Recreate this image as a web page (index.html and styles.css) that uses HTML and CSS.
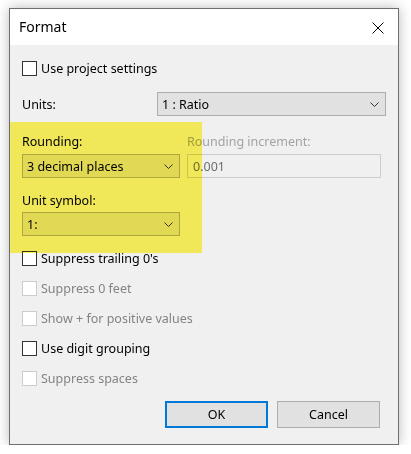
FILE: index.html
```html
<!DOCTYPE html>
<html>
<head>
<meta charset="utf-8">
<link rel="stylesheet" href="styles.css">
</head>
<body>
<div class="window">
  <div class="titlebar">
    <span class="title">Format</span>
    <svg class="close" width="12" height="12" viewBox="0 0 12 12"><path d="M0.5 0.5 L11.5 11.5 M11.5 0.5 L0.5 11.5" stroke="#000" stroke-width="1" fill="none"/></svg>
  </div>
  <div class="content">
    <div class="check-row first">
      <span class="box"></span><span class="check-label">Use project settings</span>
    </div>
    <div class="units-row">
      <span class="units-label">Units:</span>
      <div class="select units-select"><span>1 : Ratio</span><svg class="chev" width="9" height="5" viewBox="0 0 9 5"><polyline points="0.5,0.5 4.5,4.5 8.5,0.5" fill="none" stroke="#333" stroke-width="1"/></svg></div>
    </div>
    <div class="round-labels">
      <span class="col-left">Rounding:</span>
      <span class="col-right disabled-text">Rounding increment:</span>
    </div>
    <div class="round-controls">
      <div class="select col-left"><span>3 decimal places</span><svg class="chev" width="9" height="5" viewBox="0 0 9 5"><polyline points="0.5,0.5 4.5,4.5 8.5,0.5" fill="none" stroke="#333" stroke-width="1"/></svg></div>
      <div class="textbox col-right">0.001</div>
    </div>
    <div class="sym-label">Unit symbol:</div>
    <div class="select col-left"><span>1:</span><svg class="chev" width="9" height="5" viewBox="0 0 9 5"><polyline points="0.5,0.5 4.5,4.5 8.5,0.5" fill="none" stroke="#333" stroke-width="1"/></svg></div>
    <div class="checks">
      <div class="check-row"><span class="box"></span><span class="check-label">Suppress trailing 0's</span></div>
      <div class="check-row dis"><span class="box"></span><span class="check-label">Suppress 0 feet</span></div>
      <div class="check-row dis"><span class="box"></span><span class="check-label">Show + for positive values</span></div>
      <div class="check-row"><span class="box"></span><span class="check-label">Use digit grouping</span></div>
      <div class="check-row dis"><span class="box"></span><span class="check-label">Suppress spaces</span></div>
    </div>
    <div class="buttons">
      <div class="btn default">OK</div>
      <div class="btn">Cancel</div>
    </div>
  </div>
  <div class="highlight"></div>
</div>
</body>
</html>
```
FILE: styles.css
```css
html, body {
  margin: 0;
  padding: 0;
  background: #ffffff;
}
body {
  font-family: "Noto Sans", "Open Sans", sans-serif;
  font-size: 12.5px;
  color: #000;
}
.window {
  position: relative;
  margin: 8px 0 0 9px;
  width: 388px;
  height: 435px;
  border: 1px solid #6e6e6e;
  background: #f0f0f0;
  box-shadow: 0 0 12px rgba(0,0,0,0.28);
  display: flex;
  flex-direction: column;
}
.titlebar {
  height: 36px;
  background: #ffffff;
  display: flex;
  align-items: center;
  justify-content: space-between;
  padding: 0 14px 0 9px;
}
.title {
  font-size: 14px;
  margin-top: -1px;
}
.close {
  display: block;
  margin-top: 1px;
}
.content {
  flex: 1;
  display: flex;
  flex-direction: column;
  padding: 0 12px;
}
.check-row {
  height: 30px;
  display: flex;
  align-items: center;
}
.check-row.first {
  margin-top: 8px;
}
.box {
  width: 13px;
  height: 13px;
  border: 1px solid #333333;
  background: #ffffff;
  margin-right: 4px;
  flex: none;
}
.check-row.dis .box {
  border-color: #cccccc;
}
.check-row.dis .check-label {
  color: #838383;
}
.units-row {
  margin-top: 9px;
  height: 24px;
  display: flex;
  align-items: center;
}
.units-label {
  width: 135px;
  flex: none;
}
.select {
  box-sizing: border-box;
  height: 24px;
  background: #e1e1e1;
  border: 1px solid #adadad;
  display: flex;
  align-items: center;
  justify-content: space-between;
  padding: 0 6px 0 4px;
}
.units-select {
  flex: 1;
}
.chev {
  display: block;
}
.round-labels {
  margin-top: 15px;
  height: 20px;
  display: flex;
  align-items: center;
  margin-bottom: 3px;
}
.col-left {
  width: 158px;
  flex: none;
}
.col-right {
  width: 194px;
  margin-left: 7px;
  box-sizing: border-box;
}
.disabled-text {
  color: #a3a3a3;
}
.round-controls {
  display: flex;
  height: 24px;
}
.textbox {
  height: 24px;
  border: 1px solid #cccccc;
  background: #f0f0f0;
  color: #6d6d6d;
  display: flex;
  align-items: center;
  padding-left: 5px;
}
.sym-label {
  margin-top: 13px;
  height: 20px;
  line-height: 20px;
  margin-bottom: 1px;
}
.checks {
  margin-top: 7px;
}
.buttons {
  margin-top: 8px;
  display: flex;
  justify-content: flex-end;
  gap: 9px;
  padding-right: 6px;
}
.btn {
  box-sizing: border-box;
  width: 103px;
  height: 27px;
  background: #e1e1e1;
  border: 1px solid #adadad;
  display: flex;
  align-items: center;
  justify-content: center;
}
.btn.default {
  border: 2px solid #0078d7;
}
.highlight {
  position: absolute;
  left: 0;
  top: 113px;
  width: 192px;
  height: 131px;
  background: #fff65e;
  mix-blend-mode: multiply;
}
```
